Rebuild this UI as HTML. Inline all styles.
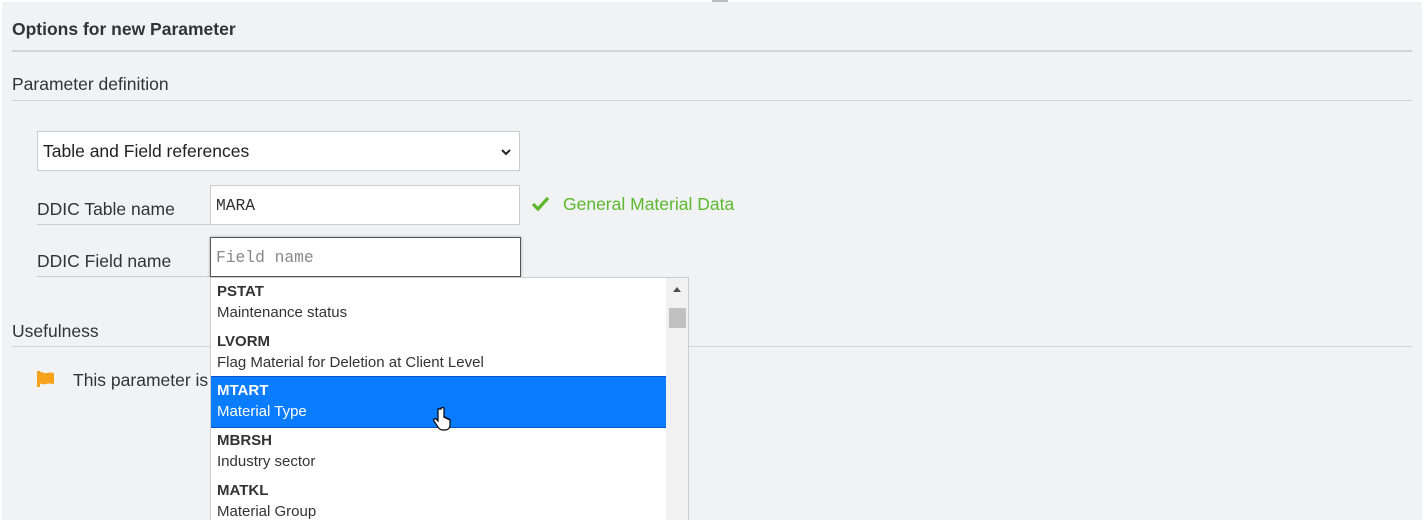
<!DOCTYPE html>
<html><head><meta charset="utf-8"><style>
*{box-sizing:border-box;margin:0;padding:0}
body{width:1424px;height:520px;background:#fff;font-family:"Liberation Sans",Arial,sans-serif;color:#333;overflow:hidden;position:relative}
.bg{position:absolute;left:2px;top:2px;width:1420px;height:518px;background:#f1f2f4}
.a{position:absolute}
.t{font-size:17.5px;white-space:nowrap}
.inp{position:absolute;background:#fff;border:1px solid #ccc}
.mono{font-family:"Liberation Mono",monospace;font-size:16.3px}
.item{position:absolute;left:0;width:455px;height:50px;padding-left:6px}
.item b{display:block;font-size:15px;margin-top:5px;height:21px}
.item span{display:block;font-size:15px;margin-top:0}
</style></head><body>
<div class="bg"></div>
<div class="a" style="left:712px;top:0;width:16px;height:2px;background:#bbb"></div>
<div class="a t" style="left:12px;top:19px;font-weight:bold">Options for new Parameter</div>
<div class="a" style="left:12px;top:50px;width:1400px;height:2px;background:#d3d3d5"></div>
<div class="a t" style="left:12px;top:74px">Parameter definition</div>
<div class="a" style="left:12px;top:100px;width:1400px;height:1px;background:#d3d3d5"></div>
<div class="inp" style="left:37px;top:131px;width:483px;height:40px"></div>
<div class="a t" style="left:43px;top:141px;color:#222">Table and Field references</div>
<svg class="a" style="left:500px;top:147px" width="12" height="10" viewBox="0 0 12 10"><path d="M2 3 L6 7 L10 3" stroke="#222" stroke-width="2" fill="none"/></svg>
<div class="a t" style="left:37px;top:199px">DDIC Table name</div>
<div class="a" style="left:37px;top:224px;width:174px;height:1px;background:#ccc"></div>
<div class="inp" style="left:210px;top:185px;width:310px;height:40px"></div>
<div class="a mono" style="left:216px;top:196px;color:#333">MARA</div>
<svg class="a" style="left:531px;top:195px" width="20" height="18" viewBox="0 0 20 18"><path d="M2 9 L7 14 L17 3" stroke="#5cb82e" stroke-width="3.2" fill="none"/></svg>
<div class="a t" style="left:563px;top:194px;color:#5cb82e">General Material Data</div>
<div class="a t" style="left:37px;top:251px">DDIC Field name</div>
<div class="a" style="left:37px;top:276px;width:174px;height:1px;background:#ccc"></div>
<div class="inp" style="left:210px;top:237px;width:311px;height:40px;border-color:#555;box-shadow:0 0 3px rgba(0,0,0,.3)"></div>
<div class="a mono" style="left:216px;top:248px;color:#888">Field name</div>
<div class="a t" style="left:12px;top:321px">Usefulness</div>
<div class="a" style="left:12px;top:346px;width:1400px;height:1px;background:#d3d3d5"></div>
<svg class="a" style="left:36px;top:370px" width="20" height="18" viewBox="0 0 20 18"><path d="M2 2 c4 -1 6 2 9 1 c3-1 5 0 7 0 v11 c-3 0 -5 -1 -8 0 c-3 1 -5 -1 -8 0z" fill="#f7a21b"/><rect x="1" y="1" width="3" height="16" fill="#f7a21b"/></svg>
<div class="a t" style="left:73px;top:370px">This parameter is</div>
<div class="a" style="left:210px;top:277px;width:479px;height:243px;background:#fff;border:1px solid #ccc;border-bottom:none;overflow:hidden">
 <div class="item" style="top:0"><b>PSTAT</b><span>Maintenance status</span></div>
 <div class="item" style="top:50px"><b>LVORM</b><span>Flag Material for Deletion at Client Level</span></div>
 <div class="item" style="top:98px;background:#0a7cff;color:#fff;border-top:1px solid #0055cc;border-bottom:1px solid #0055cc;height:52px"><b>MTART</b><span>Material Type</span></div>
 <div class="item" style="top:149px"><b>MBRSH</b><span>Industry sector</span></div>
 <div class="item" style="top:199px"><b>MATKL</b><span>Material Group</span></div>
 <div class="a" style="left:455px;top:0;width:22px;height:243px;background:#f1f1f1"></div>
 <svg class="a" style="left:460px;top:7px" width="12" height="8" viewBox="0 0 12 8"><path d="M2 7 L6 2 L10 7z" fill="#505050"/></svg>
 <div class="a" style="left:458px;top:30px;width:17px;height:20px;background:#c1c1c1"></div>
</div>
<svg class="a" style="left:433px;top:406px" width="18" height="28" viewBox="0 0 18 28"><path d="M5 3 v12 l-2-2 c-2-1-3 1-2 2 l4 6 c1 2 3 3 5 3 h2 c3 0 5-2 5-5 v-5 c0-1-2-1-2 0 v-1 c0-1-2-1-2 0 v-1 c0-1-2-1-2 0 v-9 c0-2-3-2-3 0z" fill="#fff" stroke="#000" stroke-width="1.2"/></svg>
</body></html>
